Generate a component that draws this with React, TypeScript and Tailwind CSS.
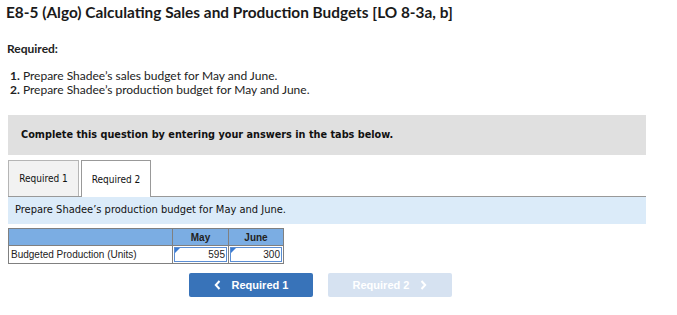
import { ReactElement } from "react";

const Corner = () => (
  <span className="absolute left-0 top-0 w-0 h-0 border-t-[5px] border-t-[#3b7bd0] border-r-[5px] border-r-transparent" />
);

const App = (): ReactElement => {
  return (
    <div className="bg-white w-[677px] h-[315px] overflow-hidden text-[#222]">
      <div className="pl-[6px] pt-[3px]">
        <h1 className="font-['Lato',sans-serif] font-bold text-[15.4px] leading-[18px] text-[#1a1a1a]">
          E8-5 (Algo) Calculating Sales and Production Budgets [LO 8-3a, b]
        </h1>
        <div className="mt-[21px] font-['Lato',sans-serif] font-bold text-[12px] leading-[14px] pl-px">
          Required:
        </div>
        <ol className="mt-[13px] font-['Lato',sans-serif] text-[12px] leading-[14px] pl-[4px]">
          <li>
            <span className="font-bold">1.</span> Prepare Shadee’s sales budget for May and June.
          </li>
          <li>
            <span className="font-bold">2.</span> Prepare Shadee’s production budget for May and June.
          </li>
        </ol>
      </div>

      <div className="ml-[8px] w-[638px] mt-[18px]">
        <div className="bg-[#e0e0e0] h-[40px] flex items-center pl-[13px]">
          <span className="font-['DejaVu_Sans_Condensed','DejaVu_Sans',sans-serif] font-bold text-[10.8px] text-[#111]">
            Complete this question by entering your answers in the tabs below.
          </span>
        </div>

        <div className="mt-[5px] flex items-end h-[37px] border-b border-[#999]">
          <div className="w-[71px] h-[36px] bg-[#f2f2f2] border border-b-0 border-[#b5b5b5] flex items-center justify-center font-['DejaVu_Sans_Condensed','DejaVu_Sans',sans-serif] text-[10px] text-[#111]">
            Required 1
          </div>
          <div className="ml-[2px] w-[70px] h-[37px] -mb-px bg-white border border-b-0 border-[#999] flex items-center justify-center font-['DejaVu_Sans_Condensed','DejaVu_Sans',sans-serif] text-[10px] text-[#111]">
            Required 2
          </div>
        </div>

        <div className="bg-[#dbebf9] h-[27px] flex items-center pl-[7px]">
          <span className="font-['DejaVu_Sans_Condensed','DejaVu_Sans',sans-serif] text-[11px] text-[#111]">
            Prepare Shadee’s production budget for May and June.
          </span>
        </div>

        <div className="mt-[4px] w-[276px] border border-[#808080] font-['Liberation_Sans',Arial,sans-serif] text-[10px]">
          <div className="flex h-[17px] bg-[#7badE3] border-b border-[#808080]">
            <div className="w-[164px] border-r border-[#808080]" />
            <div className="w-[56px] border-r border-[#808080] flex items-center justify-center font-bold text-[#222]">
              May
            </div>
            <div className="flex-1 flex items-center justify-center font-bold text-[#222]">June</div>
          </div>
          <div className="flex h-[17px] bg-white">
            <div className="w-[164px] border-r border-[#808080] flex items-center pl-[2px] text-[#222]">
              Budgeted Production (Units)
            </div>
            <div className="w-[56px] border-r border-[#808080] p-px">
              <div className="relative h-full border border-[#5b8ed4] flex items-center justify-end pr-px text-[#222]">
                <Corner />
                595
              </div>
            </div>
            <div className="flex-1 p-px">
              <div className="relative h-full border border-[#5b8ed4] flex items-center justify-end pr-px text-[#222]">
                <Corner />
                300
              </div>
            </div>
          </div>
        </div>

        <div className="mt-[9px] flex pl-[181px] gap-[15px] font-['Liberation_Sans',Arial,sans-serif] font-bold text-[11px] text-white">
          <div className="w-[124px] h-[24px] bg-[#3873b9] rounded-[2px] flex items-center justify-center gap-[11px]">
            <svg width="7" height="10" viewBox="0 0 7 10">
              <path d="M5.5 1 L1.8 5 L5.5 9" stroke="white" strokeWidth="2" fill="none" />
            </svg>
            <span>Required 1</span>
          </div>
          <div className="w-[124px] h-[24px] bg-[#d6e2f1] rounded-[2px] flex items-center justify-center gap-[11px]">
            <span>Required 2</span>
            <svg width="7" height="10" viewBox="0 0 7 10">
              <path d="M1.5 1 L5.2 5 L1.5 9" stroke="white" strokeWidth="2" fill="none" />
            </svg>
          </div>
        </div>
      </div>
    </div>
  );
};

export default App;
